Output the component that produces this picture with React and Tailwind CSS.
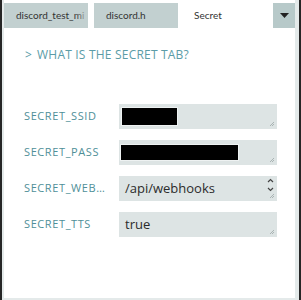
import React from "react";

const Grip = () => (
  <svg className="absolute right-[2px] bottom-[2px]" width="6" height="6" viewBox="0 0 6 6">
    <path d="M5 1 L1 5 M5 3 L3 5" stroke="#aab4b4" strokeWidth="1" />
  </svg>
);

const Field = ({ label, children }) => (
  <div className="flex items-center h-[25px]">
    <div className="w-[95px] shrink-0 text-[11px] tracking-[0.6px] text-[#4f8f98] truncate pr-2">
      {label}
    </div>
    <div className="relative w-[158px] h-[25px] bg-[#dde4e4] flex items-center">
      {children}
      <Grip />
    </div>
  </div>
);

export default function App() {
  const tabs = ["discord_test_mi", "discord.h"];

  return (
    <div
      className="w-[301px] h-[300px] flex bg-[#262626] px-[2px] overflow-hidden"
      style={{ fontFamily: '"Open Sans", "Noto Sans", sans-serif' }}
    >
      <div className="flex-1 flex flex-col bg-[#e4eaea] pl-[2px] pr-[4px] pb-[2px]">
        <div className="flex-1 flex flex-col bg-white">
          {/* Tabs */}
          <div className="flex h-[28px] pt-[3px] gap-[6px]">
            {tabs.map((t) => (
              <div
                key={t}
                className="relative w-[84px] h-[25px] bg-[#c2d0d0] pl-[12px] flex items-center text-[10px] text-[#333] overflow-hidden whitespace-nowrap"
                style={{ fontFamily: "Lato, sans-serif" }}
              >
                {t}
                <div className="absolute right-0 top-0 h-full w-[12px] bg-gradient-to-r from-transparent to-[#c2d0d0]" />
              </div>
            ))}
            <div
              className="w-[83px] h-[25px] bg-white pl-[10px] flex items-center text-[10px] text-[#333]"
              style={{ fontFamily: "Lato, sans-serif" }}
            >
              Secret
            </div>
            <div className="flex-1 h-[25px] bg-[#b7c9c9] flex items-center justify-center">
              <svg width="9" height="5" viewBox="0 0 9 5">
                <path d="M0 0 H9 L4.5 5 Z" fill="#222" />
              </svg>
            </div>
          </div>

          {/* Heading */}
          <div className="mt-[19px] pl-[21px] flex items-center h-[16px] text-[12px] tracking-[0.2px] text-[#5b9ca7]">
            <span className="mr-[5px]">&gt;</span>
            <span>WHAT IS THE SECRET TAB?</span>
          </div>

          {/* Fields */}
          <div className="mt-[41px] pl-[20px] flex flex-col gap-[11px]">
            <Field label="SECRET_SSID">
              <div className="ml-[2px] w-[57px] h-[19px] bg-black border border-[#eef2f2]" />
            </Field>
            <Field label="SECRET_PASS">
              <div className="ml-[1px] w-[119px] h-[17px] bg-black border border-[#eef2f2]" />
            </Field>
            <Field label="SECRET_WEBHOOKS">
              <span className="pl-[6px] text-[13px] text-[#2b2b2b]">/api/webhooks</span>
              <div className="absolute right-[3px] top-[2px] flex flex-col items-center gap-[4px]">
                <svg width="7" height="5" viewBox="0 0 7 5">
                  <path d="M1 4 L3.5 1.5 L6 4" stroke="#444" strokeWidth="1.2" fill="none" />
                </svg>
                <svg width="7" height="5" viewBox="0 0 7 5">
                  <path d="M1 1 L3.5 3.5 L6 1" stroke="#444" strokeWidth="1.2" fill="none" />
                </svg>
              </div>
            </Field>
            <Field label="SECRET_TTS">
              <span className="pl-[6px] text-[13px] text-[#2b2b2b]">true</span>
            </Field>
          </div>
        </div>
      </div>
    </div>
  );
}
